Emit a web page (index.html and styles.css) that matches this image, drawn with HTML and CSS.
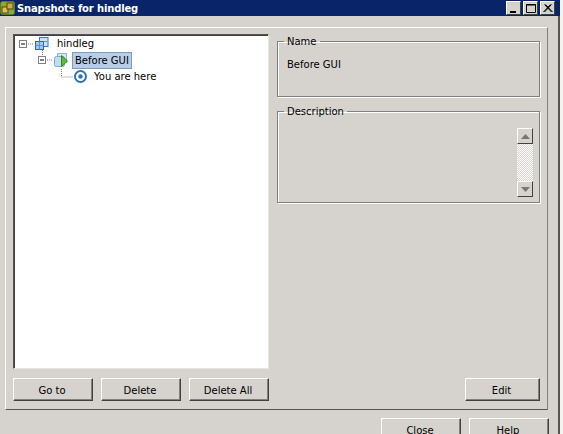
FILE: index.html
```html
<!DOCTYPE html>
<html lang="en">
<head>
<meta charset="utf-8">
<title>Snapshots for hindleg</title>
<link rel="stylesheet" href="styles.css">
</head>
<body>
<div class="window">
  <header class="titlebar">
    <svg class="app-icon" width="16" height="16" viewBox="0 0 16 16">
      <rect x="0.5" y="1.5" width="14" height="13" rx="2" fill="#8fa63a" stroke="#5f7a20"/>
      <rect x="2" y="7" width="6" height="6" fill="#e0c050" stroke="#4a4a20"/>
      <rect x="7" y="3" width="6" height="6" fill="#d8a838" stroke="#4a4a20"/>
    </svg>
    <span class="title">Snapshots for hindleg</span>
    <div class="caption-buttons">
      <span class="caption-btn"><svg width="12" height="11" viewBox="0 0 12 11"><rect x="2" y="8" width="6" height="2" fill="#000"/></svg></span>
      <span class="caption-btn"><svg width="12" height="11" viewBox="0 0 12 11"><path d="M1.5 1.5h9v8h-9z M1 2h10" fill="none" stroke="#000"/></svg></span>
      <span class="caption-btn close-btn"><svg width="12" height="11" viewBox="0 0 12 11"><path d="M2.5 1.5l7 7.5M3.5 1.5l7 7.5M9.5 1.5l-7 7.5M8.5 1.5l-7 7.5" fill="none" stroke="#000"/></svg></span>
    </div>
  </header>
  <main class="panel">
    <section class="left-col">
      <div class="tree">
        <div class="tree-row row-root">
          <svg class="gutter" width="36" height="17" viewBox="0 0 36 17">
            <rect x="1.5" y="5.5" width="7" height="7" fill="#fff" stroke="#808080"/>
            <path d="M3 9h4" stroke="#000"/>
            <path d="M10 9h6" stroke="#808080" stroke-dasharray="1 1"/>
            <path d="M24.5 15v2" stroke="#808080" stroke-dasharray="1 1"/>
            <rect x="21.5" y="2.5" width="8.5" height="9" fill="#cfe0f2" stroke="#3f78b8"/>
            <rect x="17.5" y="6.5" width="8" height="8" fill="#a9c8e8" stroke="#2f68a8"/>
            <path d="M21.5 6.5v8M17.5 10.5h8M25.5 6.5h4" stroke="#5f94cc" fill="none"/>
          </svg>
          <span class="node-label">hindleg</span>
        </div>
        <div class="tree-row row-snapshot">
          <svg class="gutter" width="35" height="17" viewBox="0 0 35 17">
            <path d="M5.5 0v4" stroke="#808080" stroke-dasharray="1 1"/>
            <rect x="1.5" y="4.5" width="7" height="7" fill="#fff" stroke="#808080"/>
            <path d="M3 8h4" stroke="#000"/>
            <path d="M10 8h6" stroke="#808080" stroke-dasharray="1 1"/>
            <rect x="20.5" y="1.5" width="9" height="9" fill="#d6e6f4" stroke="#8fb8dc"/>
            <rect x="17.5" y="4.5" width="10" height="10" rx="2" fill="#c4dcef" stroke="#7aa8d0"/>
            <path d="M24.5 3.5l6 5.5-6 5.5z" fill="#5ac030" stroke="#2f8a1c"/>
          </svg>
          <span class="node-label selected">Before GUI</span>
        </div>
        <div class="tree-row row-here">
          <svg class="gutter" width="32" height="15" viewBox="0 0 32 15">
            <path d="M0.5 0v8h11" fill="none" stroke="#808080" stroke-dasharray="1 1"/>
            <circle cx="19.5" cy="7.5" r="5.5" fill="#fff" stroke="#2f70b8" stroke-width="2"/>
            <circle cx="19.5" cy="7.5" r="2.2" fill="#2f70b8"/>
          </svg>
          <span class="node-label">You are here</span>
        </div>
      </div>
      <div class="button-row">
        <button class="btn" type="button">Go to</button>
        <button class="btn" type="button">Delete</button>
        <button class="btn" type="button">Delete All</button>
      </div>
    </section>
    <section class="right-col">
      <fieldset class="group name-group">
        <legend>Name</legend>
        <p class="group-text">Before GUI</p>
      </fieldset>
      <fieldset class="group desc-group">
        <legend>Description</legend>
        <div class="scrollbar">
          <span class="scroll-btn"><svg width="9" height="5" viewBox="0 0 9 5"><path d="M4.5 0L9 5H0z" fill="#777"/></svg></span>
          <span class="scroll-track"></span>
          <span class="scroll-btn"><svg width="9" height="5" viewBox="0 0 9 5"><path d="M0 0h9L4.5 5z" fill="#777"/></svg></span>
        </div>
      </fieldset>
      <div class="edit-row">
        <button class="btn edit-btn" type="button">Edit</button>
      </div>
    </section>
  </main>
  <footer class="footer">
    <button class="btn" type="button">Close</button>
    <button class="btn" type="button">Help</button>
  </footer>
</div>
</body>
</html>
```
FILE: styles.css
```css
* { box-sizing: border-box; }
html, body { margin: 0; height: 100%; overflow: hidden; background: #f4f3ef; }
body { font: 10px/13px "DejaVu Sans", sans-serif; color: #000; }
.window {
  width: 560px;
  height: 434px;
  background: #d6d3ce;
  border-right: 2px solid #555;
  display: flex;
  flex-direction: column;
}
.titlebar {
  height: 16px;
  margin-right: -2px;
  background: #0a246a;
  display: flex;
  align-items: center;
  color: #fff;
  font-weight: bold;
  font-size: 10px;
  letter-spacing: -0.15px;
}
.app-icon { flex: none; margin-right: 1px; }
.title { flex: 1; white-space: nowrap; }
.caption-buttons { display: flex; gap: 2px; margin-right: 5px; }
.caption-btn {
  width: 15px;
  height: 14px;
  background: #d6d3ce;
  border: 1px solid;
  border-color: #fff #404040 #404040 #fff;
  display: flex;
  align-items: center;
  justify-content: center;
}
.panel {
  margin: 11px 10px 0 5px;
  height: 383px;
  flex: none;
  border: 1px solid;
  border-color: #fff #808080 #555 #fff;
  padding: 6px 7px 8px 7px;
  display: grid;
  grid-template-columns: 256px 263px;
  column-gap: 8px;
}
.left-col { display: flex; flex-direction: column; gap: 9px; min-height: 0; }
.tree {
  flex: 1;
  background: #fff;
  border: 1px solid;
  border-color: #555 #e8e6e0 #e8e6e0 #555;
  box-shadow: inset 1px 1px 0 #404040;
}
.tree-row { display: flex; align-items: center; white-space: nowrap; }
.gutter { flex: none; }
.row-root { height: 17px; padding-left: 4px; }
.row-root .node-label { margin-left: 2px; }
.row-snapshot { height: 17px; padding-left: 23px; }
.row-here { height: 15px; padding-left: 47px; }
.node-label { padding: 0 1px; }
.row-snapshot .selected {
  background: #b7cde8;
  border: 1px solid #7f9db9;
  height: 17px;
  width: 60px;
  padding: 1px 2px;
}
.button-row { display: flex; gap: 8px; }
.btn {
  width: 80px;
  height: 23px;
  padding: 1px 2px 0 0;
  background: #d6d3ce;
  border: 1px solid;
  border-color: #fff #404040 #404040 #fff;
  box-shadow: inset -1px -1px 0 #808080;
  font: inherit;
  color: #000;
}
.right-col { display: flex; flex-direction: column; min-height: 0; }
.group {
  margin: 0;
  min-width: 0;
  border: 1px solid #808080;
  box-shadow: inset 1px 1px 0 #fff, 1px 1px 0 #fff;
  padding: 0 9px;
}
.group legend { margin: 0 0 -1px -3px; padding: 1px 3px 0; }
.name-group { height: 63px; }
.group-text { margin: 11px 0 0; }
.desc-group {
  height: 99px;
  margin-top: 7px;
  display: flex;
  justify-content: flex-end;
}
.scrollbar {
  width: 16px;
  margin: 11px -3px 0 auto;
  display: flex;
  flex-direction: column;
}
.scroll-btn {
  height: 16px;
  background: #d6d3ce;
  border: 1px solid;
  border-color: #fff #404040 #404040 #fff;
  display: flex;
  align-items: center;
  justify-content: center;
  flex: none;
}
.scroll-track {
  height: 37px;
  background: repeating-conic-gradient(#fff 0 25%, #d6d3ce 0 50%) 0 0 / 2px 2px;
}
.edit-row { margin-top: auto; display: flex; justify-content: flex-end; }
.edit-btn { width: 75px; }
.footer {
  display: flex;
  justify-content: flex-end;
  gap: 8px;
  margin-top: 8px;
  padding-right: 9px;
}
```
